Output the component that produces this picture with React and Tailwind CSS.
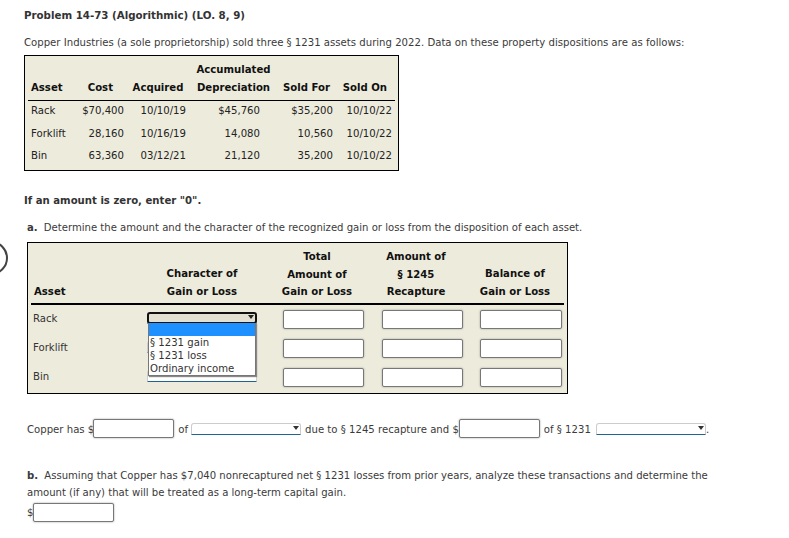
import React from 'react';

const assets = [
    { name: 'Rack', cost: '$70,400', acquired: '10/10/19', dep: '$45,760', soldFor: '$35,200', soldOn: '10/10/22' },
    { name: 'Forklift', cost: '28,160', acquired: '10/16/19', dep: '14,080', soldFor: '10,560', soldOn: '10/10/22' },
    { name: 'Bin', cost: '63,360', acquired: '03/12/21', dep: '21,120', soldFor: '35,200', soldOn: '10/10/22' },
];

const topCols = 'grid grid-cols-[48px_48px_66px_85px_58px_62px] items-center';
const answerCols = 'grid grid-cols-[116px_110px_26px_81px_18px_81px_17px_82px]';

function AmountInput({ className = 'w-[81px]' }) {
    return <div className={`${className} h-[19px] shrink-0 bg-white border border-[#777] rounded-[2px] shadow-[0_0_2px_#999]`}></div>;
}

function SelectBox({ className = 'w-[110px]' }) {
    return (
        <div className={`${className} h-[12px] shrink-0 relative border border-[#ccc] border-b-[#1f6391] rounded-t-[3px] bg-white`}>
            <span className="absolute right-[1px] top-[2px] w-0 h-0 border-l-[3px] border-r-[3px] border-t-[4px] border-l-transparent border-r-transparent border-t-[#333]"></span>
        </div>
    );
}

export default function App() {
    return (
        <div className="relative w-[789px] h-[538px] overflow-hidden bg-white pl-6 pt-[9px] text-[10.15px] leading-[12px] text-[#3a3a3a] font-['DejaVu_Sans','Liberation_Sans',sans-serif]">
            <div className="absolute left-[-26px] top-[241px] w-[34px] h-[34px] rounded-full border-2 border-[#444]"></div>

            <h1 className="font-bold text-[10.25px] text-[#333]">Problem 14-73 (Algorithmic) (LO. 8, 9)</h1>
            <p className="mt-[16px]">Copper Industries (a sole proprietorship) sold three § 1231 assets during 2022. Data on these property dispositions are as follows:</p>

            <div className="mt-[6px] w-[375px] h-[116px] border border-black bg-[#edebdc] px-[3px] text-[#222]">
                <div className={`${topCols} mt-[8px] font-bold text-[#111]`}>
                    <span className="col-start-4 text-center pl-[2px]">Accumulated</span>
                </div>
                <div className={`${topCols} mt-[6px] pb-[6px] border-b border-black font-bold text-[#111]`}>
                    <span className="pl-[3px]">Asset</span>
                    <span className="text-right pr-[11px]">Cost</span>
                    <span className="text-center pl-[2px]">Acquired</span>
                    <span className="text-center pl-[2px]">Depreciation</span>
                    <span className="text-right pr-[3px]">Sold For</span>
                    <span className="text-right pr-[8px]">Sold On</span>
                </div>
                <div className="mt-[4px] flex flex-col gap-[10.5px]">
                    {assets.map((a) => (
                        <div key={a.name} className={topCols}>
                            <span className="pl-[3px]">{a.name}</span>
                            <span className="text-right">{a.cost}</span>
                            <span className="text-right pr-[4px]">{a.acquired}</span>
                            <span className="text-right pr-[15px]">{a.dep}</span>
                            <span className="text-right">{a.soldFor}</span>
                            <span className="text-right pr-[3px]">{a.soldOn}</span>
                        </div>
                    ))}
                </div>
            </div>

            <p className="mt-[24px] font-bold text-[#333]">If an amount is zero, enter "0".</p>
            <p className="mt-[15px] ml-[3px] text-[10.08px]"><b className="mr-[3px]">a.</b> Determine the amount and the character of the recognized gain or loss from the disposition of each asset.</p>

            <div className="relative mt-[8px] ml-[3px] w-[541px] h-[152px] border border-black bg-[#edebdc] px-[3px] text-[#222]">
                <div className={`${answerCols} h-[62px] border-b-2 border-black font-bold text-[#111] text-center whitespace-nowrap`}>
                    <span className="col-start-1 self-end pb-[5px] pl-[3px] text-left">Asset</span>
                    <div className="col-start-2 self-end pb-[5px] flex flex-col items-center gap-[6px]">
                        <span>Character of</span>
                        <span>Gain or Loss</span>
                    </div>
                    <div className="col-start-4 self-end pb-[5px] pr-[13px] flex flex-col items-center gap-[5.5px]">
                        <span>Total</span>
                        <span>Amount of</span>
                        <span>Gain or Loss</span>
                    </div>
                    <div className="col-start-6 self-end pb-[5px] pr-[13px] flex flex-col items-center gap-[5.5px]">
                        <span>Amount of</span>
                        <span>§ 1245</span>
                        <span>Recapture</span>
                    </div>
                    <div className="col-start-8 self-end pb-[5px] pr-[12px] flex flex-col items-center gap-[6px]">
                        <span>Balance of</span>
                        <span>Gain or Loss</span>
                    </div>
                </div>
                <div>
                    {assets.map((a) => (
                        <div key={a.name} className={`${answerCols} items-center h-[29px]`}>
                            <span className="pl-[2px] pb-[1px] text-[#333]">{a.name}</span>
                            <SelectBox className="w-[110px] mb-[3px]" />
                            <span></span>
                            <AmountInput />
                            <span></span>
                            <AmountInput />
                            <span></span>
                            <AmountInput className="w-[82px]" />
                        </div>
                    ))}
                </div>

                {/* open dropdown sits over the selects below it */}
                <div className="absolute left-[119px] top-[69px] w-[110px] h-[12px] border-2 border-[#111] rounded-[3px] bg-[#e4e1d2]">
                    <span className="absolute right-[1px] top-[1px] w-0 h-0 border-l-[3px] border-r-[3px] border-t-[4px] border-l-transparent border-r-transparent border-t-[#222]"></span>
                </div>
                <div className="absolute left-[120px] top-[80px] w-[108px] bg-white border border-[#777] border-t-0 shadow-[1px_1px_1px_#888] text-[#333]">
                    <div className="h-[13px] bg-[#1e90ff]"></div>
                    <div className="h-[13px] pl-[1px] leading-[13px]">§ 1231 gain</div>
                    <div className="h-[13px] pl-[1px] leading-[13px]">§ 1231 loss</div>
                    <div className="h-[13px] pl-[1px] leading-[13px]">Ordinary income</div>
                </div>
            </div>

            <div className="mt-[25px] ml-[3px] flex items-center h-[19px]">
                <span className="mt-[2px]">Copper has $</span>
                <AmountInput className="w-[81px] -ml-[1px]" />
                <span className="ml-[4px] mt-[2px]">of</span>
                <SelectBox className="w-[110px] ml-[3px]" />
                <span className="ml-[4px] mt-[2px]">due to § 1245 recapture and $</span>
                <AmountInput className="w-[81px]" />
                <span className="ml-[4px] mt-[2px]">of § 1231</span>
                <SelectBox className="w-[110px] ml-[5px]" />
                <span className="mt-[2px]">.</span>
            </div>

            <p className="mt-[29px] ml-[3px] leading-[17px] text-[10.08px]"><b className="mr-[3px]">b.</b> Assuming that Copper has $7,040 nonrecaptured net § 1231 losses from prior years, analyze these transactions and determine the<br />amount (if any) that will be treated as a long-term capital gain.</p>
            <div className="mt-[2px] ml-[3px] flex items-center">
                <span>$</span>
                <AmountInput className="w-[81px]" />
            </div>
        </div>
    );
}
